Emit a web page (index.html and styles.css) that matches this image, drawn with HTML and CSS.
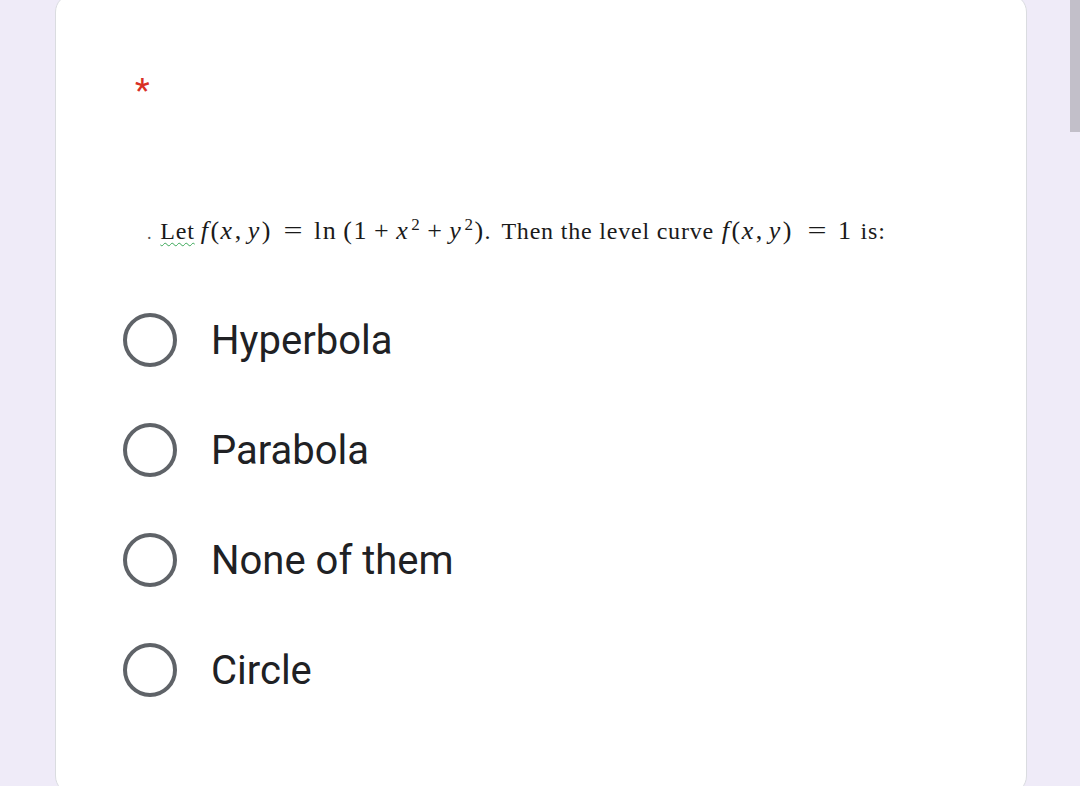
FILE: index.html
```html
<!DOCTYPE html>
<html>
<head>
<meta charset="utf-8">
<link rel="stylesheet" href="styles.css">
</head>
<body>
<div class="page">
  <div class="card">
    <div class="required">*</div>
    <div class="question"><span class="dot">.</span><span class="let">Let</span><span class="m first"><i>f</i>(<i>x</i>,<i class="y">y</i>)<span class="op eq">=</span>ln<span class="gap"></span>(1<span class="op pl">+</span><i>x</i><sup>2</sup><span class="op pl">+</span><i>y</i><sup>2</sup>)</span>.<span class="gap2"></span>Then the level curve <span class="m second"><i>f</i>(<i>x</i>,<i class="y">y</i>)<span class="op eq">=</span>1</span><span class="tail">is:</span></div>
    <div class="options">
      <label class="option"><span class="radio"></span><span class="label">Hyperbola</span></label>
      <label class="option"><span class="radio"></span><span class="label">Parabola</span></label>
      <label class="option"><span class="radio"></span><span class="label">None of them</span></label>
      <label class="option"><span class="radio"></span><span class="label">Circle</span></label>
    </div>
  </div>
</div>
<div class="scrollbar"></div>
</body>
</html>
```

FILE: styles.css
```css
html, body {
  margin: 0;
  padding: 0;
  height: 100%;
  overflow: hidden;
}
body {
  background: #efebf8;
  font-family: Roboto, "Noto Sans", Arial, sans-serif;
}
.page {
  padding-left: 55px;
  width: 972px;
}
.card {
  margin-top: -6px;
  height: 800px;
  background: #fff;
  border: 1px solid #dadce0;
  border-radius: 18px;
  box-sizing: border-box;
}
.required {
  color: #d93025;
  font-family: Roboto, sans-serif;
  font-size: 34px;
  line-height: 34px;
  height: 34px;
  padding-top: 78px;
  padding-left: 79px;
}
.question {
  margin-top: 109px;
  padding-left: 91px;
  font-family: "Liberation Serif", "Times New Roman", serif;
  font-size: 24px;
  letter-spacing: 0.8px;
  line-height: 30px;
  color: #1a1a1a;
  white-space: nowrap;
}
.m {
  font-size: 26px;
  letter-spacing: 1.5px;
}
.m.first {
  margin-left: 6px;
}
.m.second {
  margin-left: 1px;
}
.m i {
  font-style: italic;
  margin-right: 1px;
}
.m .y {
  margin-left: 5px;
}
.op {
  display: inline-block;
}
.op.eq {
  margin: 0 12px 0 14px;
  transform: scaleX(1.3);
}
.second .op.eq {
  margin-left: 17px;
}
.op.pl {
  margin: 0 6px 0 6px;
}
.gap {
  display: inline-block;
  width: 6px;
}
.gap2 {
  display: inline-block;
  width: 10px;
}
.tail {
  margin-left: 8px;
}
.question sup {
  font-size: 17px;
  line-height: 0;
  vertical-align: 9px;
  margin-left: 1px;
}
.dot {
  color: #555;
  margin-right: 8px;
  font-size: 18px;
}
.let {
  text-decoration: underline wavy #3aa757;
  text-decoration-thickness: 1px;
  text-underline-offset: 3px;
}
.options {
  margin-top: 37px;
  padding-left: 67px;
}
.option {
  display: flex;
  align-items: center;
  height: 110px;
}
.radio {
  width: 54px;
  height: 54px;
  box-sizing: border-box;
  border: 4px solid #5f6368;
  border-radius: 50%;
  flex: none;
}
.label {
  margin-left: 34px;
  font-size: 40px;
  color: #202124;
}
.scrollbar {
  position: fixed;
  top: 0;
  right: 0;
  width: 10px;
  height: 132px;
  background: #c2bfc9;
}
```
